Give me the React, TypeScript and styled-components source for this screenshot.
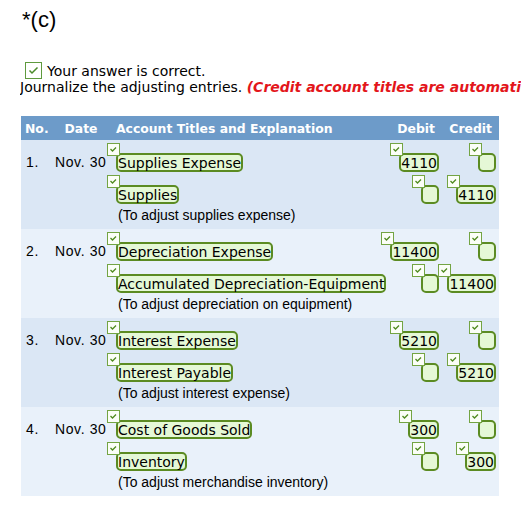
import React from "react";
import styled, { createGlobalStyle } from "styled-components";

const GlobalStyle = createGlobalStyle`
  html, body {
    margin: 0;
    padding: 0;
    background: #ffffff;
  }
`;

type Entry = {
  no: string;
  date: string;
  debitAccount: string;
  creditAccount: string;
  amount: string;
  note: string;
};

const entries: Entry[] = [
  {
    no: "1.",
    date: "Nov. 30",
    debitAccount: "Supplies Expense",
    creditAccount: "Supplies",
    amount: "4110",
    note: "(To adjust supplies expense)",
  },
  {
    no: "2.",
    date: "Nov. 30",
    debitAccount: "Depreciation Expense",
    creditAccount: "Accumulated Depreciation-Equipment",
    amount: "11400",
    note: "(To adjust depreciation on equipment)",
  },
  {
    no: "3.",
    date: "Nov. 30",
    debitAccount: "Interest Expense",
    creditAccount: "Interest Payable",
    amount: "5210",
    note: "(To adjust interest expense)",
  },
  {
    no: "4.",
    date: "Nov. 30",
    debitAccount: "Cost of Goods Sold",
    creditAccount: "Inventory",
    amount: "300",
    note: "(To adjust merchandise inventory)",
  },
];

const Page = styled.div`
  width: 521px;
  overflow: hidden;
  padding: 9px 0 20px 20px;
  box-sizing: border-box;
  color: #000;
`;

const Title = styled.div`
  font-family: "Liberation Sans", Arial, sans-serif;
  font-size: 22px;
  line-height: 22px;
  padding-left: 2px;
`;

const Feedback = styled.div`
  display: flex;
  align-items: center;
  gap: 5px;
  height: 17px;
  margin-top: 31px;
  padding-left: 5px;
  font-family: "DejaVu Sans", Verdana, sans-serif;
  font-size: 14px;
  line-height: 16px;
`;

const BigCheck = styled.span`
  display: inline-flex;
  width: 17px;
  height: 17px;
  box-sizing: border-box;
  border: 1px solid #5f9a3e;
  background: #ffffff;
`;

const Instructions = styled.div`
  font-family: "DejaVu Sans", Verdana, sans-serif;
  font-size: 14px;
  line-height: 16px;
  white-space: nowrap;
  overflow: hidden;
`;

const Emphasis = styled.span`
  color: #e3161b;
  font-weight: bold;
  font-style: italic;
`;

const Table = styled.div`
  margin-top: 21px;
  margin-left: 1px;
  width: 478px;
`;

const columns = "34px 52px 276px 58px 58px";

const HeaderRow = styled.div`
  display: grid;
  grid-template-columns: ${columns};
  align-items: center;
  height: 24px;
  background: #6d9bc9;
  color: #ffffff;
  font-family: "DejaVu Sans", Verdana, sans-serif;
  font-weight: bold;
  font-size: 12.4px;
  white-space: nowrap;
`;

const HeadCell = styled.div<{ $align?: "left" | "center" | "right"; $pad?: number }>`
  text-align: ${({ $align }) => $align ?? "left"};
  padding: ${({ $align, $pad = 0 }) =>
    $align === "right" ? `0 ${$pad}px 0 0` : `0 0 0 ${$pad}px`};
`;

const EntryRow = styled.div<{ $shade: boolean }>`
  display: grid;
  grid-template-columns: ${columns};
  background: ${({ $shade }) => ($shade ? "#dbe7f5" : "#e9f1fa")};
`;

const PlainCell = styled.div<{ $pad?: number }>`
  padding: 14px 0 0 ${({ $pad = 0 }) => $pad}px;
  font-family: "Liberation Sans", Arial, sans-serif;
  font-size: 14px;
  line-height: 16px;
  letter-spacing: 0.6px;
  white-space: nowrap;
`;

const AccountCell = styled.div`
  display: flex;
  flex-direction: column;
  align-items: flex-start;
  gap: 3px;
  padding: 3px 0 6px 0;
  min-width: 0;
`;

const AmountCell = styled.div<{ $right: number }>`
  display: flex;
  flex-direction: column;
  align-items: flex-end;
  gap: 3px;
  padding: 3px ${({ $right }) => $right}px 0 0;
`;

const Field = styled.span`
  position: relative;
  display: inline-flex;
  padding: 10px 0 0 9px;
`;

const Tick = styled.span`
  position: absolute;
  top: 0;
  left: 0;
  z-index: 1;
  width: 13px;
  height: 13px;
  box-sizing: border-box;
  border: 1px solid #73a443;
  background: #fbfef7;
  display: flex;
`;

const Box = styled.span`
  display: inline-block;
  box-sizing: border-box;
  height: 19px;
  min-width: 18px;
  border: 2px solid #5b8b22;
  border-radius: 5px;
  background: #e5f8d6;
  font-family: "DejaVu Sans", Verdana, sans-serif;
  font-size: 14px;
  line-height: 16px;
  white-space: nowrap;
  color: #000;
`;

const Note = styled.div`
  padding-left: 11px;
  font-family: "Liberation Sans", Arial, sans-serif;
  font-size: 14px;
  line-height: 16px;
  white-space: nowrap;
`;

function TickMark() {
  return (
    <svg width="11" height="11" viewBox="0 0 11 11">
      <path d="M2.5 5 L4.5 7 L8 3.5" fill="none" stroke="#4f8a1f" strokeWidth="1.3" />
    </svg>
  );
}

function CheckedField({ value }: { value: string }) {
  return (
    <Field>
      <Tick>
        <TickMark />
      </Tick>
      <Box>{value}</Box>
    </Field>
  );
}

export default function App() {
  return (
    <>
      <GlobalStyle />
      <Page>
        <Title>*(c)</Title>
        <Feedback>
          <BigCheck>
            <svg width="15" height="15" viewBox="0 0 15 15">
              <path d="M3.5 7.5 L6 10 L11.5 4.5" fill="none" stroke="#4a8a2a" strokeWidth="1.5" />
            </svg>
          </BigCheck>
          Your answer is correct.
        </Feedback>
        <Instructions>
          Journalize the adjusting entries.{" "}
          <Emphasis>(Credit account titles are automatically indented when amount is entered.)</Emphasis>
        </Instructions>
        <Table>
          <HeaderRow>
            <HeadCell $pad={4}>No.</HeadCell>
            <HeadCell $align="center">Date</HeadCell>
            <HeadCell $pad={9}>Account Titles and Explanation</HeadCell>
            <HeadCell $align="right" $pad={6}>Debit</HeadCell>
            <HeadCell $align="right" $pad={7}>Credit</HeadCell>
          </HeaderRow>
          {entries.map((e, i) => (
            <EntryRow key={e.no} $shade={i % 2 === 0}>
              <PlainCell $pad={5}>{e.no}</PlainCell>
              <PlainCell>{e.date}</PlainCell>
              <AccountCell>
                <CheckedField value={e.debitAccount} />
                <CheckedField value={e.creditAccount} />
                <Note>{e.note}</Note>
              </AccountCell>
              <AmountCell $right={2}>
                <CheckedField value={e.amount} />
                <CheckedField value="" />
              </AmountCell>
              <AmountCell $right={3}>
                <CheckedField value="" />
                <CheckedField value={e.amount} />
              </AmountCell>
            </EntryRow>
          ))}
        </Table>
      </Page>
    </>
  );
}
